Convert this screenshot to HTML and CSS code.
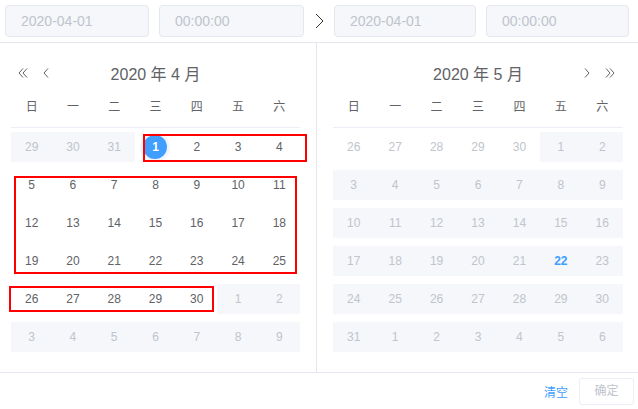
FILE: index.html
```html
<!DOCTYPE html>
<html>
<head>
    <title>日期时间范围选择</title>
    <link rel="stylesheet" href="styles.css">
</head>
<body>
    <div class="picker">
        <!-- 顶部日期时间输入 -->
        <div class="time-header">
            <div class="editor w-date1">2020-04-01</div>
            <div class="editor w-time1">00:00:00</div>
            <div class="sep">
                <svg width="9" height="16" viewBox="0 0 9 16"><polyline points="1,1 8,8 1,15" fill="none" stroke="#303133" stroke-width="1"/></svg>
            </div>
            <div class="editor w-date2">2020-04-01</div>
            <div class="editor w-time2">00:00:00</div>
        </div>

        <div class="panels">
            <!-- 左侧：4 月 -->
            <div class="panel is-left">
                <div class="panel-header">
                    <div class="arrows">
                        <svg class="d-arrow" width="10" height="10" viewBox="0 0 10 10"><polyline points="5,0.5 1,5 5,9.5" /><polyline points="9,0.5 5,5 9,9.5" /></svg>
                        <svg class="s-arrow" width="6" height="10" viewBox="0 0 6 10"><polyline points="5,0.5 1,5 5,9.5" /></svg>
                    </div>
                    <div class="title">2020 年 4 月</div>
                    <div></div>
                </div>
                <div class="week">
                    <span>日</span><span>一</span><span>二</span><span>三</span><span>四</span><span>五</span><span>六</span>
                </div>
                <div class="days">
                    <div class="dis"><div>29</div></div><div class="dis"><div>30</div></div><div class="dis"><div>31</div></div>
                    <div class="start"><div><span>1</span></div></div><div><div>2</div></div><div><div>3</div></div><div><div>4</div></div>

                    <div><div>5</div></div><div><div>6</div></div><div><div>7</div></div><div><div>8</div></div><div><div>9</div></div><div><div>10</div></div><div><div>11</div></div>
                    <div><div>12</div></div><div><div>13</div></div><div><div>14</div></div><div><div>15</div></div><div><div>16</div></div><div><div>17</div></div><div><div>18</div></div>
                    <div><div>19</div></div><div><div>20</div></div><div><div>21</div></div><div><div>22</div></div><div><div>23</div></div><div><div>24</div></div><div><div>25</div></div>
                    <div><div>26</div></div><div><div>27</div></div><div><div>28</div></div><div><div>29</div></div><div><div>30</div></div>
                    <div class="dis"><div>1</div></div><div class="dis"><div>2</div></div>

                    <div class="dis"><div>3</div></div><div class="dis"><div>4</div></div><div class="dis"><div>5</div></div><div class="dis"><div>6</div></div><div class="dis"><div>7</div></div><div class="dis"><div>8</div></div><div class="dis"><div>9</div></div>
                </div>
            </div>

            <!-- 右侧：5 月 -->
            <div class="panel is-right">
                <div class="panel-header">
                    <div></div>
                    <div class="title">2020 年 5 月</div>
                    <div class="arrows right">
                        <svg class="s-arrow" width="6" height="10" viewBox="0 0 6 10"><polyline points="1,0.5 5,5 1,9.5" /></svg>
                        <svg class="d-arrow" width="10" height="10" viewBox="0 0 10 10"><polyline points="1,0.5 5,5 1,9.5" /><polyline points="5,0.5 9,5 5,9.5" /></svg>
                    </div>
                </div>
                <div class="week">
                    <span>日</span><span>一</span><span>二</span><span>三</span><span>四</span><span>五</span><span>六</span>
                </div>
                <div class="days">
                    <div class="prev"><div>26</div></div><div class="prev"><div>27</div></div><div class="prev"><div>28</div></div><div class="prev"><div>29</div></div><div class="prev"><div>30</div></div>
                    <div class="dis"><div>1</div></div><div class="dis"><div>2</div></div>

                    <div class="dis"><div>3</div></div><div class="dis"><div>4</div></div><div class="dis"><div>5</div></div><div class="dis"><div>6</div></div><div class="dis"><div>7</div></div><div class="dis"><div>8</div></div><div class="dis"><div>9</div></div>
                    <div class="dis"><div>10</div></div><div class="dis"><div>11</div></div><div class="dis"><div>12</div></div><div class="dis"><div>13</div></div><div class="dis"><div>14</div></div><div class="dis"><div>15</div></div><div class="dis"><div>16</div></div>
                    <div class="dis"><div>17</div></div><div class="dis"><div>18</div></div><div class="dis"><div>19</div></div><div class="dis"><div>20</div></div><div class="dis"><div>21</div></div><div class="dis today"><div>22</div></div><div class="dis"><div>23</div></div>
                    <div class="dis"><div>24</div></div><div class="dis"><div>25</div></div><div class="dis"><div>26</div></div><div class="dis"><div>27</div></div><div class="dis"><div>28</div></div><div class="dis"><div>29</div></div><div class="dis"><div>30</div></div>
                    <div class="dis"><div>31</div></div><div class="dis"><div>1</div></div><div class="dis"><div>2</div></div><div class="dis"><div>3</div></div><div class="dis"><div>4</div></div><div class="dis"><div>5</div></div><div class="dis"><div>6</div></div>
                </div>
            </div>
        </div>

        <!-- 底部按钮 -->
        <div class="footer">
            <span class="text-btn">清空</span>
            <span class="btn-ok">确定</span>
        </div>

        <!-- 标注框 -->
        <div class="mark mark-1"></div>
        <div class="mark mark-2"></div>
        <div class="mark mark-3"></div>
    </div>
</body>
</html>
```

FILE: styles.css
```css
/* 基础 */
body {
    margin: 0;
    font-family: "Liberation Sans", "Noto Sans CJK SC", sans-serif;
    color: #606266;
    background: #fff;
}
.picker {
    position: relative;
    width: 638px;
    height: 409px;
    overflow: hidden;
}

/* 顶部输入 */
.time-header {
    display: flex;
    align-items: flex-start;
    height: 43px;
    box-sizing: border-box;
    padding: 5px 0 0 5px;
    border-bottom: 1px solid #e4e7ed;
}
.editor {
    height: 32px;
    box-sizing: border-box;
    border: 1px solid #e4e7ed;
    border-radius: 4px;
    background: #f5f7fa;
    color: #c0c4cc;
    font-size: 14px;
    line-height: 30px;
    padding-left: 15px;
}
.w-date1 { width: 144px; margin-right: 10px; }
.w-time1 { width: 145px; }
.w-date2 { width: 142px; margin-right: 10px; }
.w-time2 { width: 143px; }
.sep {
    width: 30px;
    height: 32px;
    display: flex;
    align-items: center;
    justify-content: center;
}

/* 面板 */
.panels {
    display: flex;
    height: 329px;
}
.panel {
    box-sizing: border-box;
    padding-top: 16px;
}
.is-left {
    width: 317px;
    padding-left: 11px;
    padding-right: 16px;
    border-right: 1px solid #e4e7ed;
}
.is-right {
    width: 321px;
    padding-left: 16px;
    padding-right: 15px;
}
.panel-header {
    display: grid;
    grid-template-columns: 1fr auto 1fr;
    align-items: center;
    height: 28px;
}
.title {
    font-size: 16px;
}
.arrows {
    display: flex;
    align-items: center;
}
.arrows svg polyline {
    fill: none;
    stroke: #606266;
    stroke-width: 1;
}
.arrows .d-arrow { margin-left: 7px; }
.arrows .s-arrow { margin-left: 15px; }
.arrows.right { justify-content: flex-end; }
.arrows.right .s-arrow { margin-left: 0; margin-right: 15px; }
.arrows.right .d-arrow { margin-left: 0; margin-right: 8px; }

/* 星期 */
.week {
    display: grid;
    grid-template-columns: repeat(7, 1fr);
    height: 40px;
    border-bottom: 1px solid #ebeef5;
    font-size: 12px;
    line-height: 40px;
    text-align: center;
}

/* 日期 */
.days {
    display: grid;
    grid-template-columns: repeat(7, 1fr);
    font-size: 12px;
    text-align: center;
}
.days > div {
    padding: 4px 0;
}
.days > div > div {
    height: 30px;
    line-height: 30px;
}
.days .prev > div { color: #c0c4cc; }
.days .dis > div {
    background: #f5f7fa;
    color: #c0c4cc;
}
.days .today > div {
    color: #409eff;
    font-weight: bold;
}
.days .start > div {
    display: flex;
    align-items: center;
    justify-content: center;
}
.days .start span {
    width: 24px;
    height: 24px;
    line-height: 24px;
    border-radius: 50%;
    background: #409eff;
    color: #fff;
    font-weight: bold;
    box-shadow: 0 0 0 3px #f2f6fc;
}

/* 底部 */
.footer {
    height: 36px;
    border-top: 1px solid #e4e7ed;
    display: flex;
    align-items: center;
    justify-content: flex-end;
    padding-right: 4px;
    font-size: 12px;
}
.text-btn {
    color: #409eff;
    margin-right: 11px;
}
.btn-ok {
    width: 55px;
    height: 27px;
    box-sizing: border-box;
    border: 1px solid #ebeef5;
    border-radius: 3px;
    color: #c0c4cc;
    line-height: 25px;
    text-align: center;
}

/* 红色标注框 */
.mark {
    position: absolute;
    border: 2px solid #ff0000;
    box-sizing: border-box;
}
.mark-1 { left: 143px; top: 134px; width: 164px; height: 28px; }
.mark-2 { left: 14px; top: 176px; width: 283px; height: 98px; }
.mark-3 { left: 9px; top: 286px; width: 205px; height: 26px; }
```
